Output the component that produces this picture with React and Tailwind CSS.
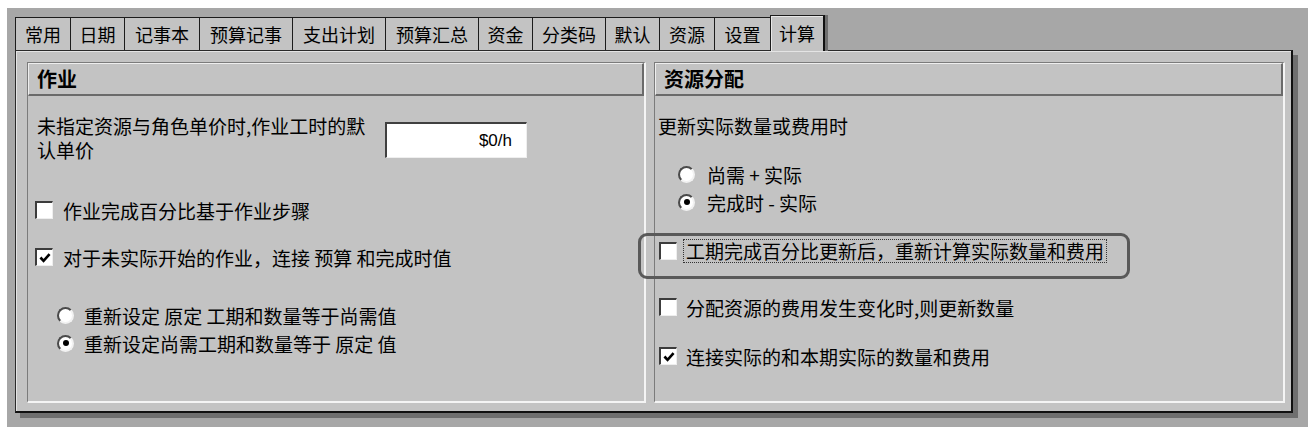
import React from 'react';

const TABS = [
  ['常用', 'w-[55px]'],
  ['日期', 'w-[54px]'],
  ['记事本', 'w-[75px]'],
  ['预算记事', 'w-[93px]'],
  ['支出计划', 'w-[93px]'],
  ['预算汇总', 'w-[93px]'],
  ['资金', 'w-[54px]'],
  ['分类码', 'w-[73px]'],
  ['默认', 'w-[54px]'],
  ['资源', 'w-[55px]'],
  ['设置', 'w-[56px]'],
];

function Check({ checked }) {
  return (
    <span className="w-[18px] h-[18px] shrink-0 bg-white border-t-2 border-l-2 border-r border-b border-t-[#3c3c3c] border-l-[#3c3c3c] border-r-[#eeeeee] border-b-[#eeeeee] flex items-center justify-center">
      {checked && (
        <svg width="12" height="12" viewBox="0 0 10 10">
          <path d="M1.2 4.6 L3.8 7.4 L8.8 1.8" fill="none" stroke="#000" strokeWidth="2.2" />
        </svg>
      )}
    </span>
  );
}

function Radio({ checked }) {
  return (
    <span className="w-[17px] h-[17px] shrink-0 rounded-full bg-white border-2 border-t-[#4a4a4a] border-l-[#4a4a4a] border-r-[#f2f2f2] border-b-[#f2f2f2] flex items-center justify-center">
      {checked && <span className="w-[6px] h-[6px] rounded-full bg-black" />}
    </span>
  );
}

function GroupBox({ title, className, children }) {
  return (
    <div className={`h-[341px] flex flex-col border-t border-l border-r-2 border-b-2 border-t-[#7b7b7b] border-l-[#7b7b7b] border-r-[#f4f4f4] border-b-[#f4f4f4] ${className}`}>
      <div className="h-[33px] shrink-0 flex items-center pl-[8px] border-t border-l border-b-2 border-r-2 border-t-[#eeeeee] border-l-[#eeeeee] border-b-[#6a6a6a] border-r-[#6a6a6a] text-[20px] font-bold leading-none">
        {title}
      </div>
      {children}
    </div>
  );
}

export default function App() {
  return (
    <div className="relative w-[1311px] h-[430px] bg-white pt-[8px] pl-[7px] pr-[3px] pb-[3px] text-black font-['Noto_Sans_CJK_SC','Noto_Sans',sans-serif]">
      <div className="h-full bg-[#a7a7a7] pt-[7px] pl-[8px] flex flex-col">
        {/* tab strip */}
        <div className="flex items-end h-[35px] text-[18px] leading-none">
          {TABS.map(([label, w]) => (
            <div key={label} className={`${w} h-[33px] shrink-0 flex items-center justify-center bg-[#c3c3c3] border-t border-l border-[#1c1c1c]`}>
              {label}
            </div>
          ))}
          <div className="relative z-10 -mb-px w-[55px] h-[36px] shrink-0 flex items-center justify-center pb-[2px] bg-[#c3c3c3] border-t border-l border-r-2 border-t-[#1c1c1c] border-l-[#1c1c1c] border-r-[#111] shadow-[3px_0_0_#6f6f6f,inset_1px_1px_0_#e8e8e8]">
            计算
          </div>
        </div>

        {/* tab page */}
        <div className="w-[1278px] h-[363px] bg-[#c3c3c3] border-t border-l border-r-2 border-b-2 border-t-[#2a2a2a] border-l-[#2a2a2a] border-r-[#111] border-b-[#111] shadow-[5px_5px_0_#6f6f6f,inset_1px_1px_0_#e4e4e4] pt-[11px] pl-[11px] flex gap-[8px] text-[19px] leading-[23px]">
          <GroupBox title="作业" className="w-[619px]">
            <div className="mt-[18px] pl-[9px] flex items-start">
              <div className="w-[348px] flex flex-col">
                <span className="leading-[24px]">未指定资源与角色单价时,作业工时的默</span>
                <span className="leading-[24px]">认单价</span>
              </div>
              <div className="mt-[8px] w-[142px] h-[36px] bg-white border-t-2 border-l-2 border-r border-b border-t-[#404040] border-l-[#404040] border-r-[#efefef] border-b-[#efefef] flex items-center justify-end pr-[14px] font-['Liberation_Sans',sans-serif] text-[17px] text-black">
                $0/h
              </div>
            </div>
            <div className="mt-[36px] pl-[7px] h-[24px] flex items-center gap-[10px]">
              <Check />
              <span>作业完成百分比基于作业步骤</span>
            </div>
            <div className="mt-[23px] pl-[7px] h-[24px] flex items-center gap-[10px]">
              <Check checked />
              <span>对于未实际开始的作业，连接 预算 和完成时值</span>
            </div>
            <div className="mt-[34px] pl-[29px] h-[24px] flex items-center gap-[10px]">
              <Radio />
              <span>重新设定 原定 工期和数量等于尚需值</span>
            </div>
            <div className="mt-[4px] pl-[29px] h-[24px] flex items-center gap-[10px]">
              <Radio checked />
              <span>重新设定尚需工期和数量等于 原定 值</span>
            </div>
          </GroupBox>

          <GroupBox title="资源分配" className="w-[631px]">
            <div className="mt-[17px] pl-[3px] h-[24px] flex items-center">更新实际数量或费用时</div>
            <div className="mt-[25px] pl-[23px] h-[24px] flex items-center gap-[12px]">
              <Radio />
              <span>尚需 + 实际</span>
            </div>
            <div className="mt-[4px] pl-[23px] h-[24px] flex items-center gap-[12px]">
              <Radio checked />
              <span>完成时 - 实际</span>
            </div>
            <div className="mt-[25px] pl-[4px] h-[24px] flex items-center gap-[6px]">
              <Check />
              <span className="px-[2px] border border-dotted border-[#333] leading-[22px]">工期完成百分比更新后，重新计算实际数量和费用</span>
            </div>
            <div className="mt-[32px] pl-[4px] h-[24px] flex items-center gap-[9px]">
              <Check />
              <span>分配资源的费用发生变化时,则更新数量</span>
            </div>
            <div className="mt-[25px] pl-[4px] h-[24px] flex items-center gap-[9px]">
              <Check checked />
              <span>连接实际的和本期实际的数量和费用</span>
            </div>
          </GroupBox>
        </div>
      </div>

      {/* highlight annotation */}
      <div className="absolute left-[638px] top-[233px] w-[492px] h-[46px] rounded-[9px] border-[3px] border-[#595959]" />
    </div>
  );
}
